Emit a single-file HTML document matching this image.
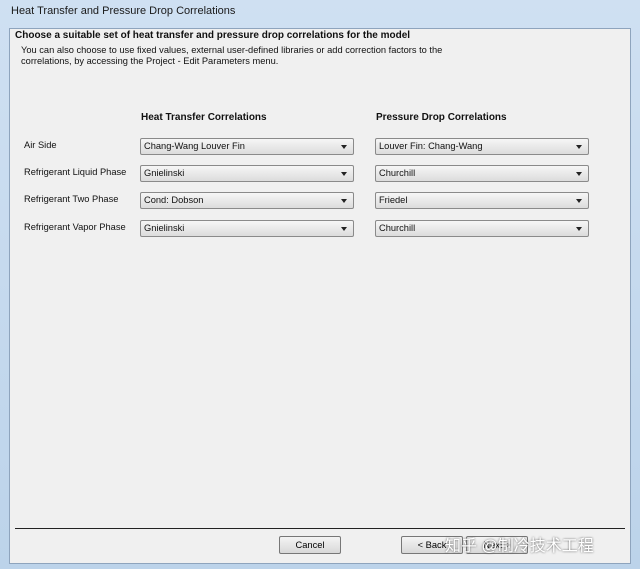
<!DOCTYPE html>
<html><head><style>
body{margin:0;width:640px;height:569px;overflow:hidden;background:#c9dcef;font-family:"Liberation Sans",sans-serif;position:relative}
.frame{position:absolute;left:0;top:0;width:640px;height:569px;background:linear-gradient(#cfe0f2,#bcd3ea);}
.title{position:absolute;left:11px;top:5px;font-size:11px;color:#1a1a1a}
.panel{position:absolute;left:9px;top:28px;width:622px;height:536px;background:#f0f0f0;border:1px solid #8ea4bd;box-sizing:border-box}
.t{position:absolute;white-space:nowrap;color:#111}
.b{font-weight:bold;font-size:10px}
.s{font-size:9.3px}
.sel{position:absolute;width:214px;height:17px;border:1px solid #8a8a8a;border-radius:2px;background:linear-gradient(#f6f6f6,#dcdcdc);box-sizing:border-box;font-size:9.3px;line-height:15px;padding-left:3px;color:#111}
.sel:after{content:"";position:absolute;right:6px;top:6px;border-left:3px solid transparent;border-right:3px solid transparent;border-top:4px solid #222}
.btn{position:absolute;height:18px;border:1px solid #777;border-radius:2px;background:linear-gradient(#f4f4f4,#d8d8d8);box-sizing:border-box;font-size:9.3px;text-align:center;line-height:16px}
</style></head><body>
<div class="frame"></div>
<div class="title">Heat Transfer and Pressure Drop Correlations</div>
<div class="panel"></div>
<div class="t b" style="left:15px;top:30px">Choose a suitable set of heat transfer and pressure drop correlations for the model</div>
<div class="t s" style="left:21px;top:45px">You can also choose to use fixed values, external user-defined libraries or add correction factors to the</div>
<div class="t s" style="left:21px;top:56px">correlations, by accessing the Project - Edit Parameters menu.</div>
<div class="t b" style="left:141px;top:112px">Heat Transfer Correlations</div>
<div class="t b" style="left:376px;top:112px">Pressure Drop Correlations</div>
<div class="t s" style="left:24px;top:140px">Air Side</div>
<div class="t s" style="left:24px;top:167px">Refrigerant Liquid Phase</div>
<div class="t s" style="left:24px;top:194px">Refrigerant Two Phase</div>
<div class="t s" style="left:24px;top:222px">Refrigerant Vapor Phase</div>
<div class="sel" style="left:140px;top:138px">Chang-Wang Louver Fin</div>
<div class="sel" style="left:140px;top:165px">Gnielinski</div>
<div class="sel" style="left:140px;top:192px">Cond: Dobson</div>
<div class="sel" style="left:140px;top:220px">Gnielinski</div>
<div class="sel" style="left:375px;top:138px">Louver Fin: Chang-Wang</div>
<div class="sel" style="left:375px;top:165px">Churchill</div>
<div class="sel" style="left:375px;top:192px">Friedel</div>
<div class="sel" style="left:375px;top:220px">Churchill</div>
<div style="position:absolute;left:15px;top:528px;width:610px;height:1px;background:#222"></div>
<div class="btn" style="left:279px;top:536px;width:62px">Cancel</div>
<div class="btn" style="left:401px;top:536px;width:62px">&lt; Back</div>
<div class="btn" style="left:466px;top:536px;width:62px">Next &gt;</div>
<div class="t" style="left:445px;top:532px;font-size:16px;color:#fff;font-family:'Liberation Sans','Noto Sans CJK SC',sans-serif;text-shadow:0 0 2px #555">知乎 @制冷技术工程</div>
</body></html>
